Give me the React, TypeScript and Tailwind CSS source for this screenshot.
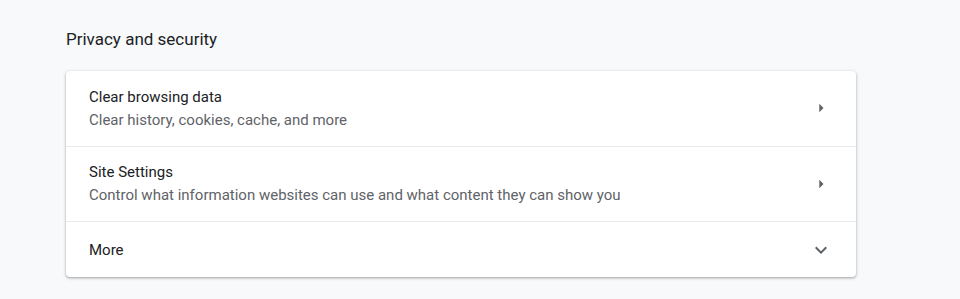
import React from "react";

function ArrowRight() {
  return (
    <svg viewBox="0 0 24 24" className="w-5 h-5 fill-[#5f6368]">
      <path d="M10 17l5-5-5-5v10z" />
    </svg>
  );
}

function ExpandMore() {
  return (
    <svg viewBox="0 0 24 24" className="w-6 h-6 fill-[#5f6368]">
      <path d="M16.59 8.59L12 13.17 7.41 8.59 6 10l6 6 6-6z" />
    </svg>
  );
}

const rows = [
  { title: "Clear browsing data", sub: "Clear history, cookies, cache, and more" },
  { title: "Site Settings", sub: "Control what information websites can use and what content they can show you" },
];

export default function App() {
  return (
    <div className="w-[960px] h-[299px] bg-[#f8f9fa] font-['Roboto',sans-serif] pl-[66px] pt-[28px]">
      <h2 className="text-[17px] leading-[23px] text-[#202124] font-normal mb-[20px]">Privacy and security</h2>
      <div className="w-[790px] bg-white rounded-[4px] shadow-[0_1px_2px_0_rgba(60,64,67,0.3),0_1px_3px_1px_rgba(60,64,67,0.15)]">
        {rows.map((r, i) => (
          <div
            key={r.title}
            className={`flex items-center h-[75px] pl-[23px] pr-[25px] pb-[1px] ${i > 0 ? "border-t border-[#e8eaed]" : ""}`}
          >
            <div className="flex-1">
              <div className="text-[15px] leading-[20px] text-[#202124]">{r.title}</div>
              <div className="text-[15px] leading-[20px] text-[#5f6368] mt-[3px]">{r.sub}</div>
            </div>
            <ArrowRight />
          </div>
        ))}
        <div className="flex items-center h-[56px] pl-[23px] pr-[23px] border-t border-[#e8eaed]">
          <div className="flex-1 text-[15px] leading-[20px] text-[#202124]">More</div>
          <ExpandMore />
        </div>
      </div>
    </div>
  );
}
